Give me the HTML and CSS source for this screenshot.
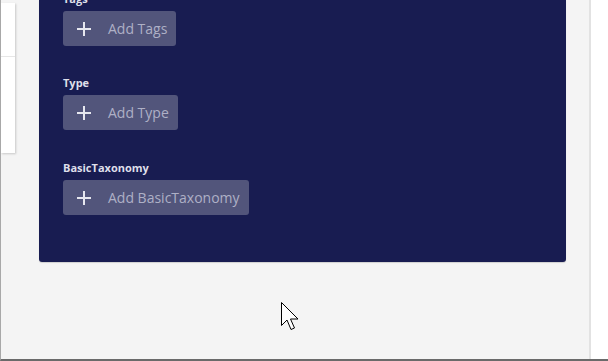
FILE: index.html
```html
<!DOCTYPE html>
<html>
<head>
<meta charset="utf-8">
<link rel="stylesheet" href="styles.css">
</head>
<body>
<div class="window">
  <div class="main">
    <div class="side-card">
      <div class="side-card-top"></div>
    </div>
    <div class="panel">
      <div class="field first">
        <div class="label">Tags</div>
        <button class="add-btn"><svg class="plus" width="14" height="14" viewBox="0 0 14 14"><path d="M7 0V14M0 7H14" stroke="#e6e7ef" stroke-width="2"/></svg><span>Add Tags</span></button>
      </div>
      <div class="field">
        <div class="label">Type</div>
        <button class="add-btn"><svg class="plus" width="14" height="14" viewBox="0 0 14 14"><path d="M7 0V14M0 7H14" stroke="#e6e7ef" stroke-width="2"/></svg><span>Add Type</span></button>
      </div>
      <div class="field">
        <div class="label">BasicTaxonomy</div>
        <button class="add-btn"><svg class="plus" width="14" height="14" viewBox="0 0 14 14"><path d="M7 0V14M0 7H14" stroke="#e6e7ef" stroke-width="2"/></svg><span>Add BasicTaxonomy</span></button>
      </div>
    </div>
    <div class="spacer"></div>
    <div class="right-pane"></div>
  </div>
  <svg class="cursor" width="20" height="30" viewBox="0 0 20 30"><path d="M0.5 0.5V23.5L6 18L10 27.5L13.5 26L9.5 17H17Z" fill="#fff" stroke="#000" stroke-width="1" stroke-linejoin="miter"/></svg>
</div>
</body>
</html>
```

FILE: styles.css
```css
html, body {
  margin: 0;
  padding: 0;
}
body {
  width: 608px;
  height: 361px;
  overflow: hidden;
  font-family: "Open Sans", "Liberation Sans", sans-serif;
}
.window {
  position: relative;
  width: 608px;
  height: 361px;
  box-sizing: border-box;
  background: #f4f4f4;
  border-left: 1px solid #a8a8a8;
  border-bottom: 2px solid #6a6a6a;
  overflow: hidden;
}
.main {
  display: flex;
  align-items: flex-start;
  height: 100%;
}
.side-card {
  width: 14px;
  height: 150px;
  margin-top: 3px;
  background: #fff;
  box-shadow: 1px 1px 2px rgba(0,0,0,0.18);
  flex-shrink: 0;
}
.side-card-top {
  height: 53px;
  border-bottom: 1px solid #e6e6e6;
}
.panel {
  margin-left: 24px;
  width: 527px;
  flex-shrink: 0;
  background: #181c51;
  border-radius: 0 0 3px 3px;
  padding: 0 24px 47px;
  box-sizing: border-box;
  box-shadow: 0 1px 1px rgba(0,0,0,0.15);
}
.field {
  margin-top: 30px;
}
.field.first {
  margin-top: -9px;
}
.label {
  font-size: 11px;
  line-height: 15px;
  font-weight: 700;
  color: #dedfea;
  margin-bottom: 5px;
}
.add-btn {
  display: inline-flex;
  align-items: center;
  height: 35px;
  padding: 0 9px 0 14px;
  border: none;
  border-radius: 3px;
  background: #52557b;
  font-family: inherit;
  font-size: 14px;
  color: #aeb0c6;
  cursor: pointer;
}
.field.first .add-btn {
  margin-bottom: -1px;
}
.plus {
  margin-right: 17px;
  flex-shrink: 0;
}
.spacer {
  flex: 1;
}
.right-pane {
  width: 17px;
  height: 100%;
  background: #fff;
  border-left: 2px solid #e2e2e2;
  flex-shrink: 0;
}
.cursor {
  position: absolute;
  left: 280px;
  top: 302px;
}
```
